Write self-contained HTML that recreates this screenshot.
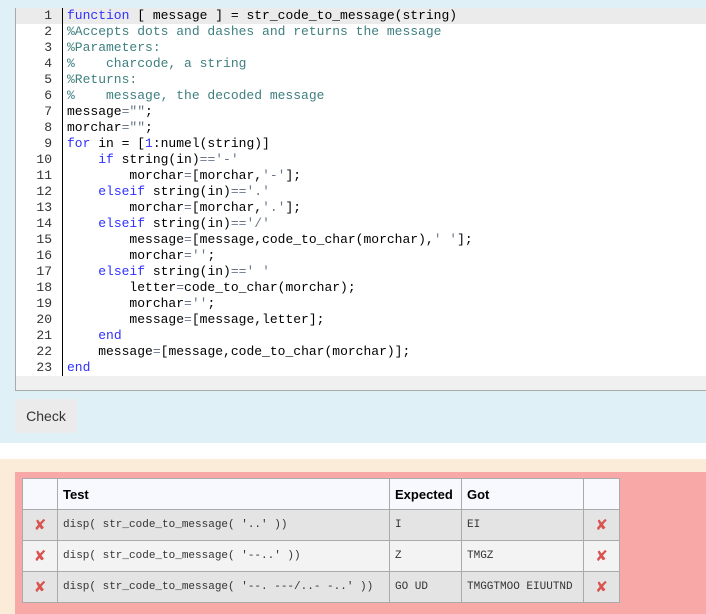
<html><head><style>
body{margin:0;width:706px;height:614px;overflow:hidden;background:#fff;font-family:"Liberation Sans",sans-serif}
#top{position:absolute;left:0;top:0;width:706px;height:443px;background:#dff0f7}
#ed{position:absolute;left:15px;top:8px;width:700px;height:382px;background:#f0f0f0;border-left:1px solid #aaa;border-bottom:1px solid #aaa}
#code{position:absolute;left:0;top:0;width:700px;height:368px;background:#fff}
.l{height:16px;line-height:16px;font:13px/16px "Liberation Mono",monospace;white-space:pre;position:relative}
.n{display:inline-block;width:36px;text-align:right;color:#333;padding-right:10px;border-right:1px solid #000;margin-right:4px}
.l.h{background:#ebebeb}
.k{color:#3030ff}.c{color:#3f7f7f}.o{color:#687687}
#btn{position:absolute;left:15px;top:399px;width:62px;height:34px;background:#ebebeb;border-radius:3px;font-size:14px;color:#333;line-height:34px;text-align:center}
#bot{position:absolute;left:0;top:459px;width:706px;height:155px;background:#faecd9}
#red{position:absolute;left:15px;top:472px;width:691px;height:142px;background:#f9a8a8}
table{position:absolute;left:22px;top:478px;border-collapse:collapse;font-size:13px;table-layout:fixed;width:597px}
td,th{border:1px solid #aaa;padding:0 5px;height:31px;text-align:left;white-space:nowrap;overflow:hidden}
th{background:#f7f9fe;font-weight:bold;color:#000}
td{font:11px "Liberation Mono",monospace;color:#333}
tr.a td{background:#e4e4e4}tr.b td{background:#f3f3f3}
.x{color:#d9534f;font:bold 15px "DejaVu Sans",sans-serif;text-align:center}
</style></head><body>
<div id="top"></div>
<div id="ed"><div id="code">
<div class="l h"><span class="n">1</span><span class="k">function</span> [ message ] = str_code_to_message(string)</div>
<div class="l"><span class="n">2</span><span class="c">%Accepts dots and dashes and returns the message</span></div>
<div class="l"><span class="n">3</span><span class="c">%Parameters:</span></div>
<div class="l"><span class="n">4</span><span class="c">%    charcode, a string</span></div>
<div class="l"><span class="n">5</span><span class="c">%Returns:</span></div>
<div class="l"><span class="n">6</span><span class="c">%    message, the decoded message</span></div>
<div class="l"><span class="n">7</span>message<span class="o">=""</span>;</div>
<div class="l"><span class="n">8</span>morchar<span class="o">=""</span>;</div>
<div class="l"><span class="n">9</span><span class="k">for</span> in = [<span class="k">1</span>:numel(string)]</div>
<div class="l"><span class="n">10</span>    <span class="k">if</span> string(in)<span class="o">=='-'</span></div>
<div class="l"><span class="n">11</span>        morchar<span class="o">=</span>[morchar,<span class="o">'-'</span>];</div>
<div class="l"><span class="n">12</span>    <span class="k">elseif</span> string(in)<span class="o">=='.'</span></div>
<div class="l"><span class="n">13</span>        morchar<span class="o">=</span>[morchar,<span class="o">'.'</span>];</div>
<div class="l"><span class="n">14</span>    <span class="k">elseif</span> string(in)<span class="o">=='/'</span></div>
<div class="l"><span class="n">15</span>        message<span class="o">=</span>[message,code_to_char(morchar),<span class="o">' '</span>];</div>
<div class="l"><span class="n">16</span>        morchar<span class="o">=''</span>;</div>
<div class="l"><span class="n">17</span>    <span class="k">elseif</span> string(in)<span class="o">==' '</span></div>
<div class="l"><span class="n">18</span>        letter<span class="o">=</span>code_to_char(morchar);</div>
<div class="l"><span class="n">19</span>        morchar<span class="o">=''</span>;</div>
<div class="l"><span class="n">20</span>        message<span class="o">=</span>[message,letter];</div>
<div class="l"><span class="n">21</span>    <span class="k">end</span></div>
<div class="l"><span class="n">22</span>    message<span class="o">=</span>[message,code_to_char(morchar)];</div>
<div class="l"><span class="n">23</span><span class="k">end</span></div>
</div></div>
<div id="btn">Check</div>
<div id="bot"></div>
<div id="red"></div>
<table>
<colgroup><col style="width:35px"><col style="width:332px"><col style="width:72px"><col style="width:122px"><col style="width:36px"></colgroup>
<tr><th></th><th>Test</th><th>Expected</th><th>Got</th><th></th></tr>
<tr class="a"><td class="x">✘</td><td>disp( str_code_to_message( '..' ))</td><td>I</td><td>EI</td><td class="x">✘</td></tr>
<tr class="b"><td class="x">✘</td><td>disp( str_code_to_message( '--..' ))</td><td>Z</td><td>TMGZ</td><td class="x">✘</td></tr>
<tr class="a"><td class="x">✘</td><td>disp( str_code_to_message( '--. ---/..- -..' ))</td><td>GO UD</td><td>TMGGTMOO EIUUTND</td><td class="x">✘</td></tr>
</table>
</body></html>
